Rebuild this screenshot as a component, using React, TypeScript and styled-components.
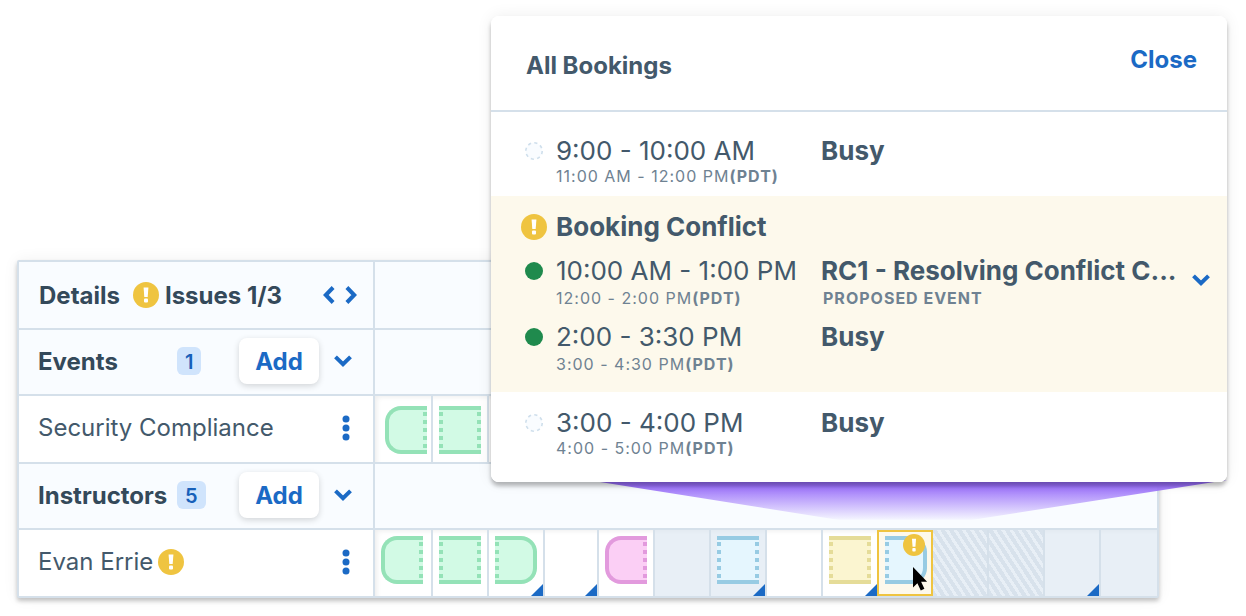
import React from "react";
import styled, { createGlobalStyle, css } from "styled-components";

const color = {
  line: "#d5e0ea",
  head: "#f9fcff",
  muted: "#e8eff6",
  blue: "#1b6ac5",
  ink: "#34495a",
  slate: "#43596b",
  soft: "#6f8292",
  gold: "#efc440",
  cream: "#fdf9ec",
};

const Global = createGlobalStyle`
  *, *::before, *::after { box-sizing: border-box; }
  body {
    margin: 0;
    background: #fff;
    font-family: Inter, "Liberation Sans", sans-serif;
    color: ${color.ink};
  }
  h1, h2, h3, p, ul { margin: 0; padding: 0; font: inherit; list-style: none; }
  button { border: 0; padding: 0; background: none; font: inherit; color: ${color.blue}; cursor: pointer; }
  svg { display: block; flex: none; }
`;

const Stage = styled.main`
  position: relative;
  padding: 260px 87px 18px 17px;
  overflow: hidden;
`;

/* ---------- schedule board ---------- */

const Board = styled.section`
  border: 2px solid ${color.line};
  border-radius: 2px;
  background: #fff;
  box-shadow: 0 3px 4px rgba(0, 0, 0, 0.22), 0 0 16px rgba(0, 0, 0, 0.06);
`;

const Row = styled.div<{ $head?: boolean; $tall?: boolean }>`
  display: flex;
  height: ${(p) => (p.$tall ? 68 : 66)}px;
  border-bottom: 2px solid ${color.line};
  background: ${(p) => (p.$head ? color.head : "#fff")};
  &:last-child {
    border-bottom: 0;
  }
`;

const Side = styled.div<{ $top?: boolean }>`
  display: flex;
  align-items: center;
  flex: 0 0 356px;
  padding: 0 16px ${(p) => (p.$top ? 0 : 2)}px ${(p) => (p.$top ? 20 : 19)}px;
  border-right: 2px solid ${color.line};
`;

const Label = styled.h2<{ $light?: boolean }>`
  padding-top: ${(p) => (p.$light ? 0 : 2)}px;
  font-size: 24px;
  line-height: 28px;
  font-weight: ${(p) => (p.$light ? 400 : 700)};
  color: ${(p) => (p.$light ? color.slate : color.ink)};
  white-space: nowrap;
`;

const GroupLabel = styled(Label)`
  flex: 0 0 139px;
`;

const Issues = styled.div`
  display: flex;
  align-items: center;
  gap: 6px;
  margin-left: 13px;
`;

const NameIssue = styled.span`
  margin-left: 5px;
`;

const Push = styled.div<{ $gap: number; $end: number }>`
  display: flex;
  align-items: center;
  gap: ${(p) => p.$gap}px;
  margin-left: auto;
  padding-right: ${(p) => p.$end}px;
`;

const Count = styled.span`
  height: 28px;
  padding: 1px 8px 0;
  border-radius: 6px;
  background: #d0e4fc;
  color: #1760b9;
  font-size: 20px;
  line-height: 28px;
  font-weight: 600;
`;

const AddButton = styled.button`
  width: 80px;
  height: 46px;
  padding-top: 2px;
  border-radius: 8px;
  background: #fff;
  box-shadow: 0 2px 6px rgba(0, 0, 0, 0.16);
  font-size: 24px;
  line-height: 28px;
  font-weight: 700;
`;

const Timeline = styled.div<{ $columns: string }>`
  display: grid;
  grid-template-columns: ${(p) => p.$columns};
  flex: 1;
  min-width: 0;
  box-shadow: inset 4px 3px 5px -2px rgba(0, 0, 0, 0.07);
`;

type Tint = "white" | "muted" | "hatch" | "alert";

const tints = {
  white: css``,
  muted: css`
    background-color: rgba(214, 226, 238, 0.55);
  `,
  hatch: css`
    background: repeating-linear-gradient(57deg, #d8e2ec 0 4px, ${color.muted} 4px 7px);
  `,
  alert: css`
    background-color: ${color.cream};
    border-right-color: ${color.gold};
    box-shadow: inset 0 2px ${color.gold}, inset 0 -2px ${color.gold}, -2px 0 ${color.gold};
  `,
};

const Slot = styled.div<{ $tint: Tint; $top: number; $inset: number }>`
  position: relative;
  min-width: 0;
  padding: ${(p) => p.$top}px 0 0 ${(p) => p.$inset}px;
  border-right: 2px solid ${color.line};
  ${(p) => tints[p.$tint]}
  &:last-child {
    border-right: 0;
  }
`;

const Corner = styled.span`
  position: absolute;
  right: 0;
  bottom: 0;
  width: 12px;
  height: 12px;
  background: ${color.blue};
  clip-path: polygon(100% 0, 100% 100%, 0 100%);
`;

const hues = {
  green: ["#94e2b7", "#d2fae5"],
  pink: ["#e29add", "#fbcff5"],
  blue: ["#97cbe3", "#e5f6fe"],
  yellow: ["#e5dc98", "#fbf5d0"],
};
type Hue = keyof typeof hues;
type Shape = "start" | "middle" | "end";

const Block = styled.div<{ $hue: Hue; $shape: Shape }>`
  --edge: ${(p) => hues[p.$hue][0]};
  --dash: repeating-linear-gradient(transparent 0 2px, var(--edge) 2px 6px, transparent 6px 8px);
  width: 42px;
  height: 48px;
  border: 4px solid var(--edge);
  background-color: ${(p) => hues[p.$hue][1]};
  background-repeat: no-repeat;
  background-size: 4px 40px;
  ${(p) =>
    p.$shape === "start" &&
    css`
      border-right: 0;
      border-radius: 16px 0 0 16px;
      background-image: var(--dash);
      background-position: right top;
    `}
  ${(p) =>
    p.$shape === "end" &&
    css`
      border-left: 0;
      border-radius: 0 16px 16px 0;
      background-image: var(--dash);
      background-position: left top;
    `}
  ${(p) =>
    p.$shape === "middle" &&
    css`
      border-left: 0;
      border-right: 0;
      background-image: var(--dash), var(--dash);
      background-position: left top, right top;
    `}
`;

const SlotAlert = styled.span`
  position: absolute;
  top: 4px;
  left: 24px;
`;

const Pointer = styled.svg`
  position: absolute;
  top: 36px;
  left: 33px;
`;

/* ---------- bookings popover ---------- */

const Popover = styled.aside`
  position: absolute;
  top: 16px;
  right: 19px;
  width: 736px;
  max-width: calc(100% - 38px);
`;

const Card = styled.div`
  position: relative;
  border-radius: 8px;
  background: #fff;
  overflow: hidden;
`;

const CardShadow = styled.div`
  position: relative;
  border-radius: 8px;
  box-shadow: 0 4px 4px rgba(0, 0, 0, 0.27), 0 0 16px rgba(0, 0, 0, 0.07);
`;

const Beam = styled.svg`
  position: absolute;
  top: 464px;
  right: 0;
`;

const CardHead = styled.header`
  display: flex;
  justify-content: space-between;
  height: 96px;
  padding: 30px 30px 0 35px;
  border-bottom: 2px solid ${color.line};
`;

const CardTitle = styled.h1`
  padding-top: 6px;
  font-size: 24px;
  line-height: 28px;
  font-weight: 700;
  color: ${color.slate};
`;

const CloseButton = styled.button`
  align-self: flex-start;
  font-size: 24px;
  line-height: 28px;
  font-weight: 700;
`;

const Group = styled.ul<{ $top: number; $bottom: number; $conflict?: boolean }>`
  display: grid;
  gap: 14px;
  padding: ${(p) => p.$top}px 17px ${(p) => p.$bottom}px 30px;
  background: ${(p) => (p.$conflict ? color.cream : "#fff")};
`;

const Booking = styled.li`
  display: grid;
  grid-template-columns: 26px 256px minmax(0, 1fr) 18px;
  column-gap: 9px;
  align-items: start;
`;

const ConflictHead = styled.li`
  display: flex;
  align-items: center;
  gap: 9px;
  height: 26px;
`;

const Marker = styled.div`
  display: grid;
  place-items: center;
  height: 34px;
`;

const Lines = styled.div<{ $gap: number }>`
  display: grid;
  gap: ${(p) => p.$gap}px;
`;

const Big = styled.p<{ $bold?: boolean }>`
  font-size: 26px;
  line-height: 34px;
  font-weight: ${(p) => (p.$bold ? 700 : 400)};
  color: ${color.slate};
  white-space: nowrap;
`;

const Small = styled.p<{ $strong?: boolean }>`
  font-size: 16px;
  line-height: 16px;
  letter-spacing: 1px;
  font-weight: ${(p) => (p.$strong ? 700 : 400)};
  padding-left: ${(p) => (p.$strong ? 2 : 0)}px;
  color: ${color.soft};
  white-space: nowrap;
  b {
    font-weight: 700;
  }
`;

const Expand = styled.button`
  align-self: center;
  justify-self: end;
`;

/* ---------- icons ---------- */

const AlertIcon = ({ size = 26 }: { size?: number }) => (
  <svg width={size} height={size} viewBox="0 0 26 26" role="img" aria-label="Issue">
    <circle cx="13" cy="13" r="13" fill={color.gold} />
    <path d="M10.6 5.6h4.8l-.7 9.4h-3.4z" fill="#fff" />
    <rect x="11" y="16.6" width="4" height="4" rx="1" fill="#fff" />
  </svg>
);

const turns = { down: 0, left: 90, right: -90 };

const Chevron = ({ dir }: { dir: keyof typeof turns }) => {
  const down = dir === "down";
  return (
    <svg width={down ? 18 : 12} height={down ? 12 : 18} viewBox={down ? "0 0 18 12" : "3 -3 12 18"} aria-hidden="true">
      <path
        d="M1.5 1.9 9 9.2l7.5-7.3"
        transform={`rotate(${turns[dir]} 9 6)`}
        fill="none"
        stroke={color.blue}
        strokeWidth="4"
      />
    </svg>
  );
};

const Dots = () => (
  <svg width="8" height="26" viewBox="0 0 8 26" aria-hidden="true">
    {[4, 13, 22].map((y) => (
      <circle key={y} cx="4" cy={y} r="3.5" fill={color.blue} />
    ))}
  </svg>
);

const Dot = ({ solid }: { solid?: boolean }) => (
  <svg width="18" height="18" viewBox="0 0 18 18" aria-hidden="true">
    {solid ? (
      <circle cx="9" cy="9" r="9" fill="#1f8a4d" />
    ) : (
      <circle cx="9" cy="9" r="8.2" fill="#f9fcff" stroke="#cfdfec" strokeWidth="1.6" strokeDasharray="3.2 3.24" />
    )}
  </svg>
);

/* ---------- data ---------- */

const columnWeights = [58, 56, 56, 54, 56, 56, 56, 56, 56, 54, 56, 56, 56, 56];
const columns = columnWeights.map((w) => `minmax(0, ${w}fr)`).join(" ");

type SlotData = { tint?: Tint; corner?: boolean; block?: [Hue, Shape]; inset?: number };

const compliance: SlotData[] = columnWeights.map((_, i) => {
  if (i === 0) return { block: ["green", "start"], inset: 10 };
  if (i === 1) return { block: ["green", "middle"] };
  return {};
});

const evan: SlotData[] = [
  { block: ["green", "start"] },
  { block: ["green", "middle"] },
  { block: ["green", "end"], corner: true },
  { corner: true },
  { block: ["pink", "start"] },
  { tint: "muted" },
  { tint: "muted", block: ["blue", "middle"], corner: true },
  {},
  { block: ["yellow", "middle"], corner: true },
  { tint: "alert", block: ["blue", "end"] },
  { tint: "hatch" },
  { tint: "hatch" },
  { tint: "muted", corner: true },
  { tint: "muted" },
];

const Slots = ({ items, top }: { items: SlotData[]; top: number }) => (
  <Timeline $columns={columns}>
    {items.map(({ tint = "white", corner, block, inset = 6 }, i) => (
      <Slot key={i} $tint={tint} $top={top} $inset={inset}>
        {block && <Block $hue={block[0]} $shape={block[1]} />}
        {corner && <Corner />}
        {tint === "alert" && (
          <>
            <SlotAlert>
              <AlertIcon size={22} />
            </SlotAlert>
            <Pointer width="18" height="26" viewBox="0 0 18 26" aria-hidden="true">
              <path d="M1 1v20.4l4.4-4.2 3.4 7.2 3.6-1.7-3.3-6.9h6z" fill="#000" />
            </Pointer>
          </>
        )}
      </Slot>
    ))}
  </Timeline>
);

const GroupRow = ({ name, count }: { name: string; count: number }) => (
  <Row $head>
    <Side>
      <GroupLabel>{name}</GroupLabel>
      <Count>{count}</Count>
      <Push $gap={15} $end={5}>
        <AddButton type="button">Add</AddButton>
        <button type="button" aria-label={`Toggle ${name}`}>
          <Chevron dir="down" />
        </button>
      </Push>
    </Side>
  </Row>
);

type BookingData = { time: string; local: string; title: string; note?: string; solid?: boolean; gap?: number };

const BookingRow = ({ time, local, title, note, solid, gap = 0 }: BookingData) => (
  <Booking>
    <Marker>
      <Dot solid={solid} />
    </Marker>
    <Lines $gap={gap}>
      <Big>{time}</Big>
      <Small>
        {local}
        <b>(PDT)</b>
      </Small>
    </Lines>
    <Lines $gap={gap}>
      <Big $bold>{title}</Big>
      {note && <Small $strong>{note}</Small>}
    </Lines>
    {note && (
      <Expand type="button" aria-label="Show event details">
        <Chevron dir="down" />
      </Expand>
    )}
  </Booking>
);

export default function App() {
  return (
    <Stage>
      <Global />
      <Board aria-label="Schedule">
        <Row $head $tall>
          <Side $top>
            <Label>Details</Label>
            <Issues>
              <AlertIcon />
              <Label as="span">Issues 1/3</Label>
            </Issues>
            <Push $gap={10} $end={0}>
              <button type="button" aria-label="Previous issue">
                <Chevron dir="left" />
              </button>
              <button type="button" aria-label="Next issue">
                <Chevron dir="right" />
              </button>
            </Push>
          </Side>
        </Row>
        <GroupRow name="Events" count={1} />
        <Row $tall>
          <Side>
            <Label as="h3" $light>Security Compliance</Label>
            <Push $gap={0} $end={7}>
              <button type="button" aria-label="Security Compliance menu">
                <Dots />
              </button>
            </Push>
          </Side>
          <Slots items={compliance} top={10} />
        </Row>
        <GroupRow name="Instructors" count={5} />
        <Row>
          <Side>
            <Label as="h3" $light>Evan Errie</Label>
            <NameIssue>
              <AlertIcon />
            </NameIssue>
            <Push $gap={0} $end={7}>
              <button type="button" aria-label="Evan Errie menu">
                <Dots />
              </button>
            </Push>
          </Side>
          <Slots items={evan} top={6} />
        </Row>
      </Board>

      <Popover aria-label="All Bookings">
        <Beam width="627" height="48" viewBox="0 0 627 48" aria-hidden="true">
          <defs>
            <linearGradient id="beam" x1="0" y1="0" x2="0" y2="1">
              <stop offset="0" stopColor="#9468fa" />
              <stop offset="0.12" stopColor="#9a70fa" />
              <stop offset="0.84" stopColor="#9a70fa" stopOpacity="0.08" />
              <stop offset="0.88" stopColor="#9a70fa" stopOpacity="0" />
            </linearGradient>
          </defs>
          <path d="M0 2 277 46h56L627 0z" fill="url(#beam)" />
        </Beam>
        <CardShadow>
          <Card>
            <CardHead>
              <CardTitle>All Bookings</CardTitle>
              <CloseButton type="button">Close</CloseButton>
            </CardHead>
            <Group $top={22} $bottom={12}>
              <BookingRow time="9:00 - 10:00 AM" local="11:00 AM - 12:00 PM" title="Busy" />
            </Group>
            <Group $top={18} $bottom={20} $conflict>
              <ConflictHead>
                <AlertIcon />
                <Big as="h2" $bold>Booking Conflict</Big>
              </ConflictHead>
              <BookingRow
                time="10:00 AM - 1:00 PM"
                local="12:00 - 2:00 PM"
                title="RC1 - Resolving Conflict C..."
                note="PROPOSED EVENT"
                solid
                gap={2}
              />
              <BookingRow time="2:00 - 3:30 PM" local="3:00 - 4:30 PM" title="Busy" solid gap={2} />
            </Group>
            <Group $top={14} $bottom={26}>
              <BookingRow time="3:00 - 4:00 PM" local="4:00 - 5:00 PM" title="Busy" />
            </Group>
          </Card>
        </CardShadow>
      </Popover>
    </Stage>
  );
}
